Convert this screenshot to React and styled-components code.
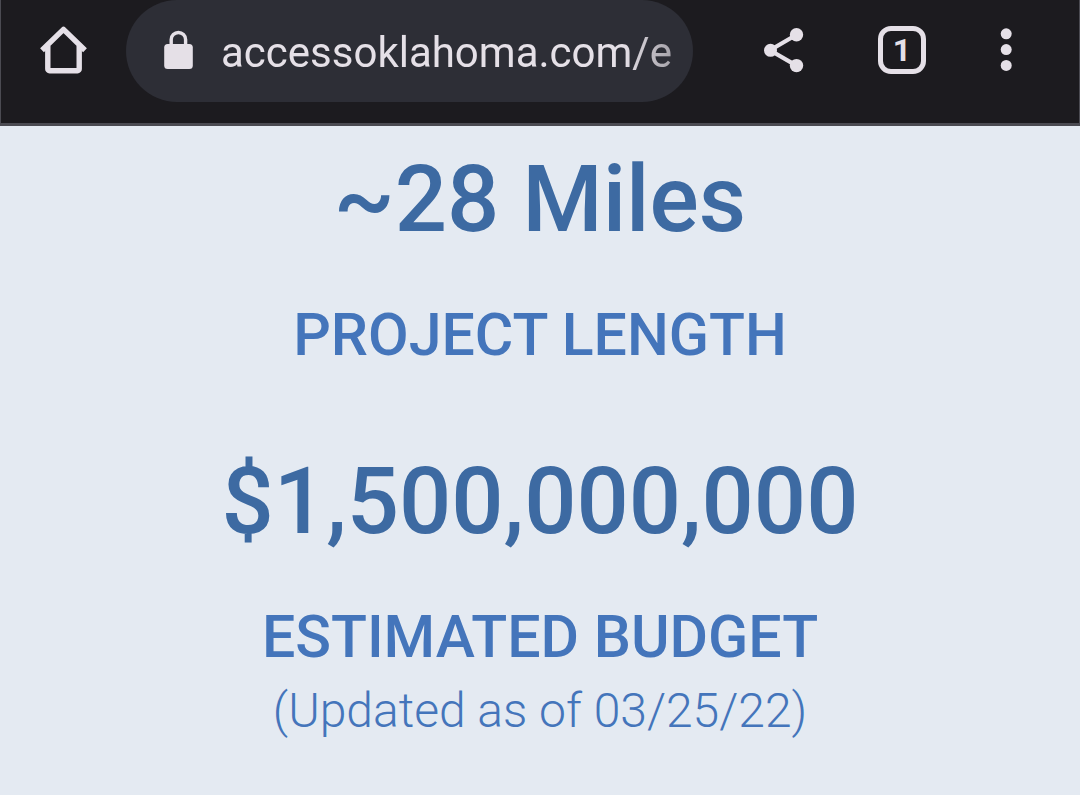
import React from 'react'
import styled, { createGlobalStyle } from 'styled-components'

const GlobalStyle = createGlobalStyle`
  * {
    box-sizing: border-box;
  }

  body {
    margin: 0;
    background: #e4eaf2;
    font-family: Roboto, "Liberation Sans", sans-serif;
  }
`

const Toolbar = styled.header`
  display: flex;
  align-items: flex-start;
  padding: 0 67px 21px 39px;
  background: #1c1b1f;
  border: 1px solid #4b4b52;
  border-width: 0 1px 3px;
`

const IconButton = styled.button`
  display: flex;
  align-items: center;
  height: 100px;
  padding: 0;
  border: 0;
  background: none;
  color: #e5e0e7;
  cursor: pointer;
`

const AddressBar = styled.label`
  display: flex;
  flex: 1;
  align-items: center;
  gap: 28px;
  min-width: 0;
  height: 102px;
  margin: 0 71px 0 38px;
  padding: 0 20px 0 37px;
  border-radius: 51px;
  background: #2d2e36;
  color: #e5e0e7;
`

const Address = styled.input`
  flex: 1;
  min-width: 0;
  height: 62px;
  padding: 2px 0 0;
  border: 0;
  outline: 0;
  background: none;
  color: inherit;
  font: 400 42px/60px Roboto, "Liberation Sans", sans-serif;
  mask-image: linear-gradient(to left, rgba(0, 0, 0, 0.65), #000 50px);
`

const Actions = styled.nav`
  display: flex;
  gap: 74px;
`

const TabCount = styled.span`
  display: flex;
  align-items: center;
  justify-content: center;
  width: 48px;
  height: 48px;
  border: 5px solid currentColor;
  border-radius: 13px;
  font: 700 32px/38px Roboto, "Liberation Sans", sans-serif;
`

const Stats = styled.main`
  display: flex;
  flex-direction: column;
  gap: 77px;
  padding: 19px 16px 48px;
  text-align: center;
`

const Value = styled.p`
  margin: 0 0 45px;
  color: #3d6aa2;
  font-size: 92px;
  font-weight: 500;
  line-height: 110px;
`

const Label = styled.h2`
  margin: 0;
  color: #4475bb;
  font-size: 59px;
  font-weight: 500;
  line-height: 70px;
  text-transform: uppercase;
`

const Note = styled.p`
  margin: 10px 0 0;
  color: #4475bb;
  font-size: 48px;
  font-weight: 300;
  line-height: 58px;
`

const HomeIcon = () => (
  <svg width="48" height="48" viewBox="0 0 48 48" fill="none" stroke="currentColor" strokeWidth="5.4">
    <path d="M2 24.3 23.5 3.4 45 24.3" strokeLinejoin="round" />
    <path d="M7.8 20V43a1.7 1.7 0 0 0 1.7 1.7h28a1.7 1.7 0 0 0 1.7-1.7V20" />
  </svg>
)

const LockIcon = () => (
  <svg width="30" height="42" viewBox="0 0 30 42">
    <rect x="1.2" y="14" width="28.6" height="25" rx="3.5" fill="currentColor" />
    <path d="M8.2 15V9.5a7.2 7 0 0 1 14.4 0V15" fill="none" stroke="currentColor" strokeWidth="3.4" />
  </svg>
)

const ShareIcon = () => (
  <svg width="40" height="46" viewBox="0 0 40 46" fill="currentColor">
    <path d="M32.5 7.8 6 23.3 32.5 38.6" fill="none" stroke="currentColor" strokeWidth="4.2" />
    <circle cx="32.5" cy="7.8" r="6.7" />
    <circle cx="6.5" cy="23.3" r="6.5" />
    <circle cx="32.5" cy="38.6" r="6.7" />
  </svg>
)

const MenuIcon = () => (
  <svg width="12" height="46" viewBox="0 0 12 46" fill="currentColor">
    <circle cx="6.2" cy="6.8" r="5.5" />
    <circle cx="6.2" cy="22.6" r="5.5" />
    <circle cx="6.2" cy="38.4" r="5.5" />
  </svg>
)

const stats = [
  { value: '~28 Miles', label: 'Project Length' },
  { value: '$1,500,000,000', label: 'Estimated Budget', note: '(Updated as of 03/25/22)' },
]

export default () => (
  <>
    <GlobalStyle />
    <Toolbar>
      <IconButton aria-label="Home">
        <HomeIcon />
      </IconButton>
      <AddressBar>
        <LockIcon />
        <Address type="text" aria-label="Address" defaultValue="accessoklahoma.com/e" />
      </AddressBar>
      <Actions>
        <IconButton aria-label="Share">
          <ShareIcon />
        </IconButton>
        <IconButton aria-label="Tabs">
          <TabCount>1</TabCount>
        </IconButton>
        <IconButton aria-label="Menu">
          <MenuIcon />
        </IconButton>
      </Actions>
    </Toolbar>
    <Stats>
      {stats.map(({ value, label, note }) => (
        <section key={label}>
          <Value>{value}</Value>
          <Label>{label}</Label>
          {note && <Note>{note}</Note>}
        </section>
      ))}
    </Stats>
  </>
)
